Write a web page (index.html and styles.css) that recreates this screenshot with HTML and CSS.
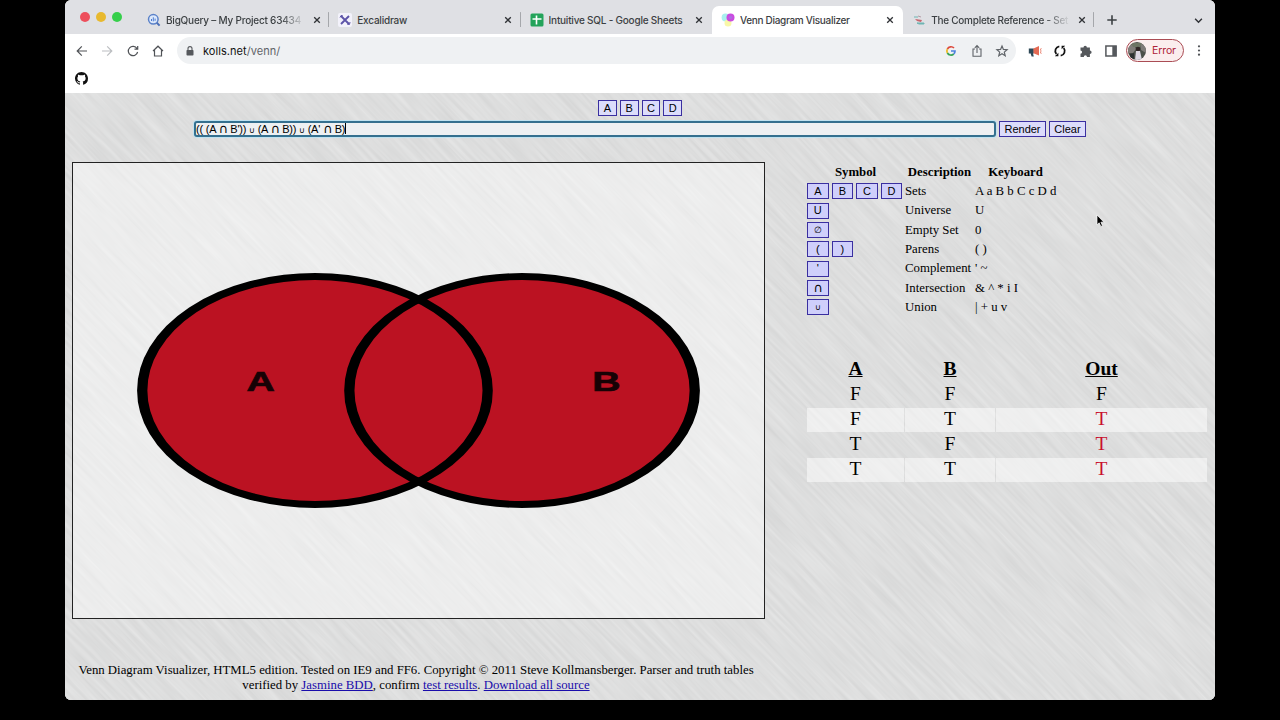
FILE: index.html
```html
<!DOCTYPE html>
<html lang="en">
<head>
    <meta charset="UTF-8">
    <title>Venn Diagram Visualizer</title>
    <link rel="stylesheet" href="styles.css">
</head>
<body>
    <div class="window">
        <!-- tab strip -->
        <div class="tabs">
            <div class="lights">
                <span class="light red"></span>
                <span class="light yellow"></span>
                <span class="light green"></span>
            </div>
            <div class="tab">
                <svg class="favicon" viewBox="0 0 14 14"><circle cx="6.3" cy="6.3" r="4.8" fill="#dce8fb" stroke="#5b82c9" stroke-width="1.5"/><path d="M4.5 6v2M6.3 4.3v4M8.1 5.6v2.2" stroke="#4a7bd0" stroke-width="1"/><path d="M9.8 9.8l2.8 2.8" stroke="#4a6fb8" stroke-width="2"/></svg>
                <span class="title fade">BigQuery – My Project 63434</span>
                <svg class="close" viewBox="0 0 8 8"><path d="M1.2 1.2l5.6 5.6M6.8 1.2L1.2 6.8"/></svg>
            </div>
            <div class="tab">
                <svg class="favicon" viewBox="0 0 14 14"><rect width="14" height="14" rx="2" fill="#f3f2fb"/><path d="M3 3l8 8M11 3l-8 8" stroke="#5d54a8" stroke-width="1.9"/><path d="M2 4.500L3 2.500l2 .5M9 11l2.500.5.5-2.500" fill="none" stroke="#5d54a8" stroke-width="1"/></svg>
                <span class="title">Excalidraw</span>
                <svg class="close" viewBox="0 0 8 8"><path d="M1.2 1.2l5.6 5.6M6.8 1.2L1.2 6.8"/></svg>
            </div>
            <div class="tab no-line">
                <svg class="favicon" viewBox="0 0 14 14"><rect x=".5" y=".5" width="13" height="13" rx="1.5" fill="#23a35a"/><path d="M2.5 6h9M6.5 2.5v9" stroke="#fff" stroke-width="1.6"/></svg>
                <span class="title">Intuitive SQL - Google Sheets</span>
                <svg class="close" viewBox="0 0 8 8"><path d="M1.2 1.2l5.6 5.6M6.8 1.2L1.2 6.8"/></svg>
            </div>
            <div class="tab active">
                <svg class="favicon" viewBox="0 0 14 14"><circle cx="4.5" cy="4.5" r="3.9" fill="#a9f0ee"/><circle cx="7" cy="10" r="3.5" fill="#f8f7a8"/><circle cx="9.5" cy="4.5" r="4" fill="#cb4be0"/><circle cx="9.5" cy="4.5" r="1.8" fill="#b06ae0"/></svg>
                <span class="title wide">Venn Diagram Visualizer</span>
                <svg class="close" viewBox="0 0 8 8"><path d="M1.2 1.2l5.6 5.6M6.8 1.2L1.2 6.8"/></svg>
            </div>
            <div class="tab">
                <svg class="favicon" viewBox="0 0 14 14"><path d="M3 6l7 1-1 2-4-1z" fill="#c7646c"/><path d="M2 4h4M5 10h7v1H7z" stroke="#6fb5b3" fill="#6fb5b3"/><path d="M6 3l3 1" stroke="#b59aa5"/></svg>
                <span class="title fade tight">The Complete Reference - Set</span>
                <svg class="close" viewBox="0 0 8 8"><path d="M1.2 1.2l5.6 5.6M6.8 1.2L1.2 6.8"/></svg>
            </div>
            <svg class="plus" viewBox="0 0 10 10"><path d="M5 .3v9.4M.3 5h9.4"/></svg>
            <svg class="chevron" viewBox="0 0 8 8"><path d="M1 2.5l3 3 3-3"/></svg>
        </div>

        <!-- address bar -->
        <div class="toolbar">
            <div class="nav">
                <svg viewBox="0 0 14 14"><path d="M12 7H2.200M6.800 2.400L2.200 7l4.600 4.600"/></svg>
                <svg class="off" viewBox="0 0 14 14"><path d="M2 7h9.800M7.200 2.400L11.800 7l-4.600 4.600"/></svg>
                <svg viewBox="0 0 14 14"><path d="M11 4.500A4.700 4.700 0 1 0 11.600 8M11.700 2v3.200H8.500"/></svg>
                <svg viewBox="0 0 14 14"><path d="M2 7l5-4.800L12 7M3.500 6v6h7V6"/></svg>
            </div>
            <div class="omnibox">
                <svg class="lock" viewBox="0 0 8 10"><rect x=".5" y="4" width="7" height="5.5" rx=".8" fill="#55585c"/><path d="M2 4V2.600a2 2 0 0 1 4 0V4" fill="none" stroke="#55585c" stroke-width="1.1"/></svg>
                <span class="url">kolls.net<span>/venn/</span></span>
                <div class="omni-icons">
                    <svg viewBox="0 0 14 14" fill="none" stroke-width="1.7"><path d="M10 4A4.100 4.100 0 0 0 3.400 5" stroke="#dd4b3e"/><path d="M3.400 5a4.100 4.100 0 0 0 0 4" stroke="#efb920"/><path d="M3.400 9A4.100 4.100 0 0 0 9.700 10" stroke="#38a457"/><path d="M9.700 10A4.100 4.100 0 0 0 11 7H7" stroke="#4b80dd"/></svg>
                    <svg viewBox="0 0 14 14" fill="none" stroke="#5f6368" stroke-width="1.1"><path d="M5 5H3v7.300h8V5H9M7 9V1.800M4.800 3.800L7 1.600l2.200 2.200"/></svg>
                    <svg viewBox="0 0 14 14" fill="none" stroke="#5f6368" stroke-width="1.2"><path d="M7 2l1.400 3.400 3.700.3-2.800 2.400.9 3.600L7 9.800l-3.200 1.900.9-3.600-2.800-2.400 3.700-.3z"/></svg>
                </div>
            </div>
            <div class="ext">
                <svg viewBox="0 0 14 14"><path d="M.8 4.500h5v5H5l.8 3H3.600l-1-3H.8z" fill="#2d4857"/><path d="M5.500 4.500L11 2v9.500L5.500 9.300z" fill="#e46a54"/><path d="M12 5.500l1.500-.8M12 7h1.500M12 8.500l1.500.8" stroke="#e46a54"/></svg>
                <svg viewBox="0 0 14 14"><path d="M6.300 2.300A4.800 4.800 0 0 0 3.300 10M7.700 11.700A4.800 4.800 0 0 0 10.700 4" fill="none" stroke="#111" stroke-width="1.8"/><path d="M5.400 8.700v3.600H1.800zM8.600 5.300V1.700h3.600z" fill="#111"/></svg>
                <svg viewBox="0 0 14 14"><path d="M1.500 3.500h3a1.700 1.700 0 1 1 3.400 0h3v3a1.700 1.700 0 1 1 0 3.400v3H8a1.600 1.600 0 1 0-3.200 0H1.500V9.700a1.600 1.600 0 1 0 0-3.200z" fill="#55585c"/></svg>
                <svg viewBox="0 0 14 14"><rect x="1.9" y="2" width="10.2" height="10" fill="none" stroke="#55585c" stroke-width="1.5"/><rect x="8.3" y="2" width="4" height="10" fill="#55585c"/></svg>
            </div>
            <div class="profile">
                <svg viewBox="0 0 18 18"><clipPath id="face"><circle cx="9" cy="9" r="9"/></clipPath><g clip-path="url(#face)"><rect width="18" height="18" fill="#4c5049"/><path d="M0 3h6l2 4-3 4H0zM12 1l6 3v7l-5-3z" fill="#807c79"/><path d="M3 1h11l-2 4H5z" fill="#6d7564"/><circle cx="10" cy="7" r="2.300" fill="#302525"/><path d="M8 9h4l2 9H7z" fill="#dcd7e2"/><path d="M2 12l4-1v7H2z" fill="#2c3030"/></g></svg>
                <span>Error</span>
            </div>
            <svg class="dots" viewBox="0 0 4 14"><circle cx="2" cy="2.5" r="1.2"/><circle cx="2" cy="7" r="1.2"/><circle cx="2" cy="11.5" r="1.2"/></svg>
        </div>
        <div class="bookmarks">
            <svg viewBox="0 0 16 16"><path d="M8 0C3.580 0 0 3.580 0 8c0 3.540 2.290 6.530 5.470 7.590.4.070.550-.17.550-.38 0-.19-.010-.82-.010-1.490-2.010.370-2.530-.490-2.690-.940-.090-.230-.480-.940-.820-1.130-.280-.150-.680-.520-.010-.530.630-.010 1.080.580 1.230.820.720 1.210 1.870.870 2.330.660.070-.520.280-.870.510-1.070-1.780-.2-3.640-.890-3.640-3.950 0-.870.310-1.590.820-2.150-.080-.2-.360-1.020.080-2.120 0 0 .670-.210 2.200.820A7.700 7.700 0 0 1 8 3.860c.680 0 1.360.090 2 .270 1.530-1.040 2.200-.820 2.200-.820.440 1.100.160 1.920.080 2.120.510.560.820 1.270.820 2.150 0 3.070-1.870 3.750-3.650 3.950.290.250.540.730.540 1.480 0 1.070-.010 1.930-.010 2.200 0 .210.150.460.550.380A8 8 0 0 0 16 8c0-4.420-3.580-8-8-8z"/></svg>
        </div>

        <!-- page -->
        <div class="page">
            <svg class="texture" width="1150" height="607">
                <filter id="scratch" x="0" y="0" width="100%" height="100%" color-interpolation-filters="sRGB">
                    <feTurbulence type="fractalNoise" baseFrequency="0.014 0.3" numOctaves="3" seed="4"/>
                    <feColorMatrix values="0.08 0 0 0 0.828  0.08 0 0 0 0.83  0.08 0 0 0 0.83  0 0 0 0 1"/>
                </filter>
                <rect x="-400" y="-400" width="1950" height="1500" filter="url(#scratch)" transform="rotate(46 575 300)"/>
            </svg>
            <div class="content">
                <div class="sets">
                    <button>A</button>
                    <button>B</button>
                    <button>C</button>
                    <button>D</button>
                </div>
                <div class="formula">
                    <div class="field">(( (A <span class="cap">∩</span> B')) <small>∪</small> (A <span class="cap">∩</span> B)) <small>∪</small> (A' <span class="cap">∩</span> B)<i class="caret"></i></div>
                    <button class="render">Render</button>
                    <button class="clear">Clear</button>
                </div>
                <div class="main">
                    <div class="left">
                        <svg class="venn" viewBox="0 0 691 455">
                            <g fill="#bb1222">
                                <ellipse cx="242" cy="227.5" rx="173" ry="114"/>
                                <ellipse cx="449" cy="227.5" rx="173" ry="114"/>
                            </g>
                            <g transform="scale(1.515 1)" fill="none" stroke="#000" stroke-width="6.8">
                                <circle cx="159.7" cy="227.5" r="114"/>
                                <circle cx="296.4" cy="227.5" r="114"/>
                            </g>
                            <g transform="scale(1.4 1)" class="label">
                                <text x="134" y="228">A</text>
                                <text x="381" y="228">B</text>
                            </g>
                        </svg>
                        <p class="footer">Venn Diagram Visualizer, HTML5 edition. Tested on IE9 and FF6. Copyright © 2011 Steve Kollmansberger. Parser and truth tables<br>verified by <a href="#">Jasmine BDD</a>, confirm <a href="#">test results</a>. <a href="#">Download all source</a></p>
                    </div>
                    <div class="right">
                        <table class="legend">
                            <tr><th class="symbol">Symbol</th><th class="desc">Description</th><th class="keys">Keyboard</th></tr>
                            <tr><td><div class="keyrow"><button>A</button><button>B</button><button>C</button><button>D</button></div></td><td>Sets</td><td>A a B b C c D d</td></tr>
                            <tr><td><div class="keyrow"><button>U</button></div></td><td>Universe</td><td>U</td></tr>
                            <tr><td><div class="keyrow"><button><span class="empty">∅</span></button></div></td><td>Empty Set</td><td>0</td></tr>
                            <tr><td><div class="keyrow"><button>(</button><button>)</button></div></td><td>Parens</td><td>( )</td></tr>
                            <tr><td><div class="keyrow"><button>'</button></div></td><td>Complement</td><td>' ~</td></tr>
                            <tr><td><div class="keyrow"><button><span class="cap">∩</span></button></div></td><td>Intersection</td><td>&amp; ^ * i I</td></tr>
                            <tr><td><div class="keyrow"><button><small>∪</small></button></div></td><td>Union</td><td>| + u v</td></tr>
                        </table>
                        <table class="truth">
                            <tr><th class="a">A</th><th class="b">B</th><th>Out</th></tr>
                            <tr><td>F</td><td>F</td><td>F</td></tr>
                            <tr class="alt"><td>F</td><td>T</td><td class="true">T</td></tr>
                            <tr><td>T</td><td>F</td><td class="true">T</td></tr>
                            <tr class="alt"><td>T</td><td>T</td><td class="true">T</td></tr>
                        </table>
                    </div>
                </div>
            </div>
        </div>
        <svg class="cursor" viewBox="0 0 9 14"><path d="M1 1v9.800l2.200-2 1.600 3.600 1.700-.7-1.600-3.500h3z" fill="#000" stroke="#fff" stroke-width=".7"/></svg>
    </div>
</body>
</html>
```
FILE: styles.css
```css
* {
    box-sizing: border-box;
}
body {
    margin: 0;
    background: #000;
    height: 720px;
    overflow: hidden;
}
svg {
    display: block;
    flex: none;
}
.window {
    position: relative;
    width: 1150px;
    height: 700px;
    margin: 0 auto;
    border-radius: 6px;
    overflow: hidden;
    background: #fff;
    font-family: Inter, "Liberation Sans", sans-serif;
}
/* tabs */
.tabs {
    display: flex;
    align-items: center;
    height: 34px;
    padding-top: 6px;
    background: #dfe0e4;
}
.lights {
    display: flex;
    gap: 6px;
    width: 73px;
    padding: 0 0 6px 15px;
}
.light {
    width: 10px;
    height: 10px;
    border-radius: 50%;
}
.red { background: #ed4f5c; }
.yellow { background: #e8b92f; }
.green { background: #36cf4b; }
.tab {
    display: flex;
    align-items: center;
    width: 191.3px;
    height: 28px;
    padding-left: 9px;
    border-radius: 7px 7px 0 0;
    background: linear-gradient(#a5a7ab, #a5a7ab) right 6px / 1px 15px no-repeat;
}
.no-line {
    background: none;
}
.active {
    background: #fff;
}
.favicon {
    width: 14px;
    height: 14px;
}
.title {
    width: 139px;
    margin-left: 5px;
    font-size: 10px;
    line-height: 14px;
    letter-spacing: -0.22px;
    font-weight: 450;
    color: #3c4043;
    white-space: nowrap;
    overflow: hidden;
}
.wide {
    letter-spacing: -0.3px;
}
.tight {
    letter-spacing: -0.26px;
}
.fade {
    -webkit-mask-image: linear-gradient(to right, #000 115px, transparent 139px);
    mask-image: linear-gradient(to right, #000 115px, transparent 139px);
}
.close {
    width: 8px;
    height: 8px;
    margin-left: 7.5px;
    fill: none;
    stroke: #303236;
    stroke-width: 1.3;
}
.plus {
    width: 10px;
    height: 10px;
    margin-left: 12.5px;
    stroke: #3c4043;
    stroke-width: 1.6;
}
.chevron {
    width: 9px;
    height: 9px;
    margin-left: auto;
    margin-right: 12px;
    fill: none;
    stroke: #303236;
    stroke-width: 1.3;
}
/* toolbar */
.toolbar {
    display: flex;
    align-items: center;
    height: 33px;
}
.nav {
    display: flex;
    gap: 11.5px;
    width: 112px;
    padding-left: 9.5px;
}
.nav svg, .omni-icons svg, .ext svg {
    width: 14px;
    height: 14px;
}
.nav svg {
    fill: none;
    stroke: #505357;
    stroke-width: 1.2;
}
.nav .off {
    stroke: #bcbec1;
}
.omnibox {
    display: flex;
    align-items: center;
    width: 839px;
    height: 27px;
    padding-left: 9px;
    border-radius: 14px;
    background: #eff1f3;
}
.lock {
    width: 8px;
    height: 10px;
}
.url {
    margin-left: 9px;
    font-size: 11px;
    letter-spacing: 0.05px;
    color: #111;
}
.url span {
    color: #5f6368;
}
.omni-icons {
    display: flex;
    gap: 11.5px;
    margin-left: auto;
    padding-right: 7px;
}
.ext {
    display: flex;
    gap: 11.5px;
    margin-left: 11.5px;
}
.profile {
    display: flex;
    align-items: center;
    width: 58px;
    height: 23px;
    margin-left: 8px;
    padding-left: 1px;
    border: 1px solid #aa4c54;
    border-radius: 12px;
    background: #fbeeee;
    font-size: 10.5px;
    letter-spacing: -0.1px;
    color: #ae2339;
}
.profile svg {
    width: 18px;
    height: 18px;
    margin-right: 6px;
}
.dots {
    width: 4px;
    height: 13px;
    margin-left: 13px;
    fill: #505357;
}
.bookmarks {
    height: 26px;
    padding: 5px 0 0 10px;
}
.bookmarks svg {
    width: 13px;
    height: 13px;
    fill: #111;
}
/* page */
.page {
    position: relative;
    height: 607px;
    background: #dcdddd;
    font-family: "Liberation Serif", serif;
    font-size: 12.8px;
    color: #000;
}
.texture {
    position: absolute;
    left: 0;
    top: 0;
}
.content {
    position: relative;
}
button {
    height: 16px;
    padding: 0;
    border: 1px solid #3a2fa0;
    background: #dcdcfb;
    font-family: "Liberation Sans", sans-serif;
    font-size: 11px;
    line-height: 13px;
    color: #000;
}
small {
    font-size: 8px;
}
.cap {
    font-family: "DejaVu Sans", sans-serif;
    font-size: 12.5px;
    line-height: 10px;
}
.empty {
    font-size: 9px;
}
.sets {
    display: flex;
    justify-content: center;
    gap: 3px;
    padding-top: 7px;
}
.sets button {
    width: 18.8px;
}
.formula {
    display: flex;
    justify-content: center;
    gap: 3px;
    margin-top: 5px;
}
.field {
    width: 802px;
    height: 16px;
    border: 2px solid #34708f;
    border-radius: 3px;
    background: #edf0f2;
    box-shadow: 0 0 0 1px #bfe2f0;
    font: 11px/12px "Liberation Sans", sans-serif;
    letter-spacing: -0.22px;
    white-space: nowrap;
}
.caret {
    display: inline-block;
    width: 1px;
    height: 11px;
    background: #000;
    vertical-align: top;
}
.render {
    width: 47px;
}
.clear {
    width: 37px;
}
.main {
    display: flex;
    margin-top: 25px;
    padding-left: 7px;
}
.left {
    width: 693px;
}
.venn {
    width: 693px;
    height: 457px;
    border: 1px solid #222;
    background: rgba(255, 255, 255, 0.45);
}
.label {
    font: bold 28px "Liberation Sans", sans-serif;
    text-anchor: middle;
    fill: #170205;
    stroke: #170205;
    stroke-width: 0.7;
}
.footer {
    margin: 44px 5px 0 0;
    text-align: center;
    line-height: 15px;
    white-space: nowrap;
}
.footer a {
    color: #1a0dab;
}
.right {
    padding-left: 41px;
}
.legend {
    border-spacing: 1.5px 1px;
    table-layout: fixed;
    width: 257px;
}
.legend th, .legend td {
    height: 18px;
    padding: 0;
    line-height: 15px;
    text-align: left;
    white-space: nowrap;
}
.legend tr:nth-child(3n) td {
    height: 19px;
}
.legend th {
    text-align: center;
}
.legend .keys {
    padding-right: 6px;
}
.symbol { width: 97px; }
.desc { width: 69px; }
.keyrow {
    display: flex;
    gap: 3px;
    height: 18px;
    align-items: center;
}
.keyrow button {
    width: 21.6px;
    background: #cfcffb;
}
.truth {
    width: 402px;
    margin-top: 40px;
    table-layout: fixed;
    border-spacing: 1.5px;
    font-size: 19.5px;
    text-align: center;
}
.truth th, .truth td {
    height: 24px;
    padding: 0 0 2px;
    line-height: 22px;
}
.truth th {
    text-decoration: underline;
}
.a { width: 97px; }
.b { width: 90px; }
.alt td {
    background: rgba(255, 255, 255, 0.5);
}
.truth .true {
    color: #c8102e;
}
.cursor {
    position: absolute;
    left: 1031px;
    top: 214px;
    width: 9px;
    height: 14px;
}
```
